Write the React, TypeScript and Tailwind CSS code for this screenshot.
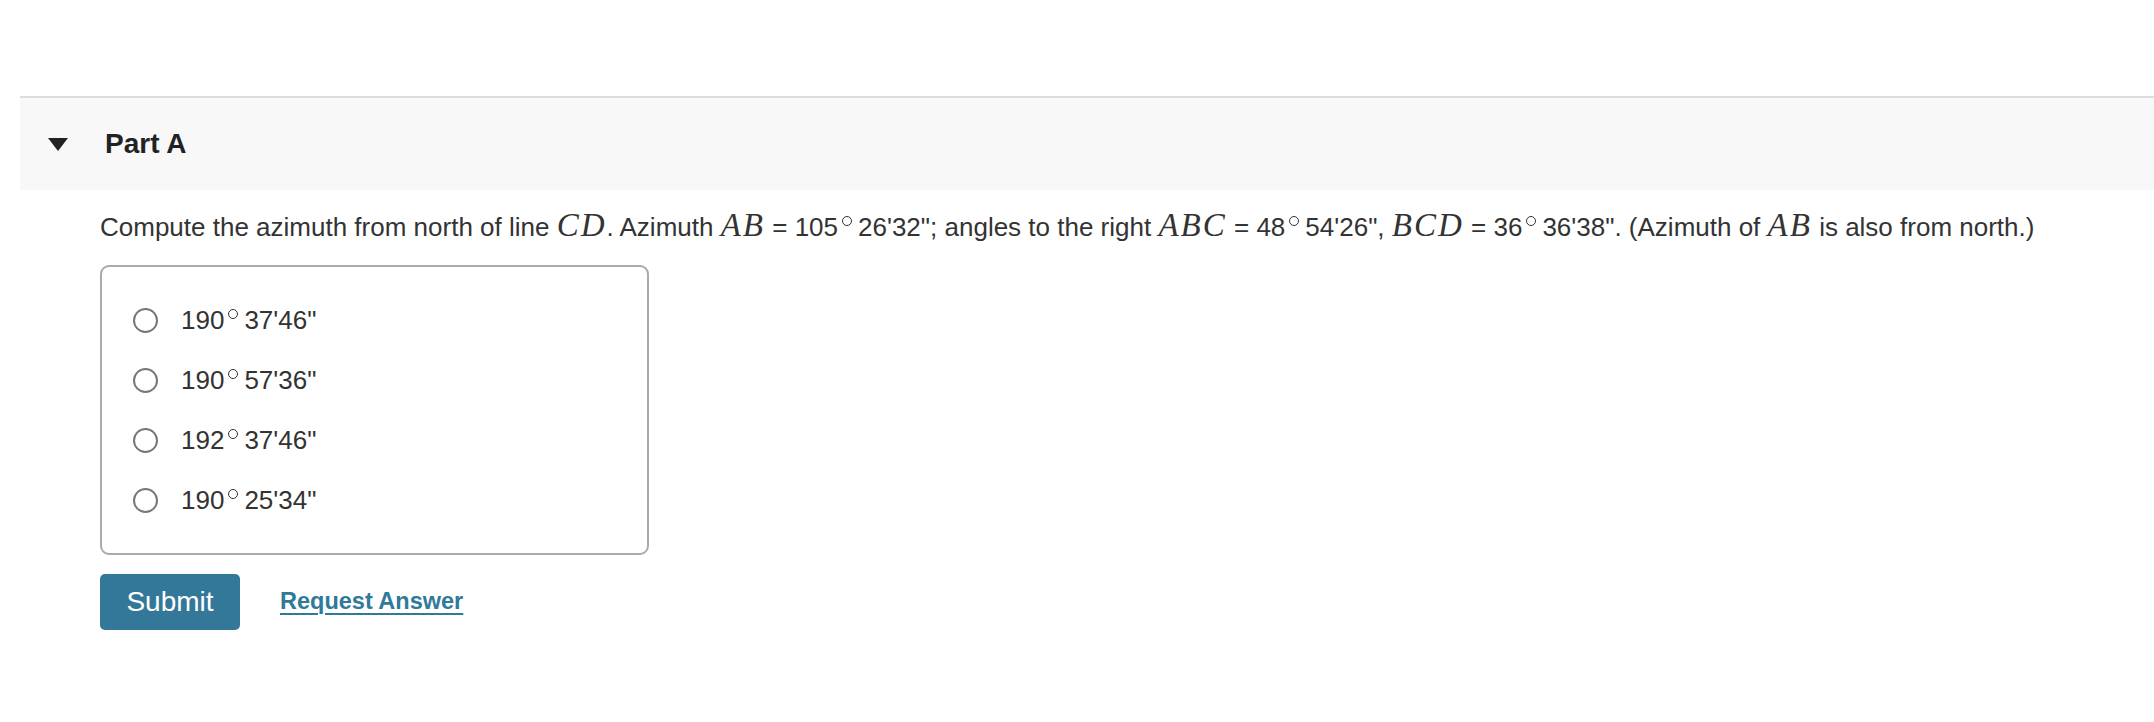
import React from 'react';

const M: React.FC<{ children: React.ReactNode }> = ({ children }) => (
  <span className="font-['Liberation_Serif','DejaVu_Serif',serif] italic text-[33px] tracking-[2px] leading-none">{children}</span>
);

// superscript degree ring, drawn as a thin circle
const Deg: React.FC = () => (
  <span className="relative -top-[10px] ml-[4px] mr-[6px] inline-block h-[10px] w-[10px] rounded-full border-[1.5px] border-[#333]" />
);

const options = [
  ['190', "37'46\""],
  ['190', "57'36\""],
  ['192', "37'46\""],
  ['190', "25'34\""],
];

export default function App() {
  return (
    <div className="min-h-screen bg-white pt-[96px] pl-[20px] font-['Liberation_Sans',Arial,sans-serif] text-[#333]">
      {/* Part header */}
      <div className="flex h-[94px] items-center border-t-2 border-[#ddd] bg-[#f8f8f8]">
        <svg className="ml-[28px]" width="20" height="13" viewBox="0 0 20 13">
          <path d="M0 0 L20 0 L10 13 Z" fill="#222" />
        </svg>
        <h2 className="ml-[37px] text-[28px] font-bold text-[#222]">Part A</h2>
      </div>

      <div className="pl-[80px]">
        <p className="mt-[19px] text-[26px] leading-[36px] whitespace-nowrap">
          Compute the azimuth from north of line <M>CD</M>. Azimuth <M>AB</M> = 105<Deg />26'32"; angles to the right{' '}
          <M>ABC</M> = 48<Deg />54'26", <M>BCD</M> = 36<Deg />36'38". (Azimuth of <M>AB</M> is also from north.)
        </p>

        <div className="mt-[20px] h-[290px] w-[549px] rounded-[9px] border-2 border-[#aaa] py-[23px] pl-[31px]">
          {options.map(([d, rest], i) => (
            <label key={i} className="flex h-[60px] items-center text-[26px]">
              <span className="h-[25px] w-[25px] rounded-full border-2 border-[#777] bg-white" />
              <span className="ml-[23px]">
                {d}
                <Deg />
                {rest}
              </span>
            </label>
          ))}
        </div>

        <div className="mt-[19px] flex items-center">
          <button className="h-[56px] w-[140px] rounded-[5px] bg-[#347899] text-[28px] text-white">Submit</button>
          <a href="#" className="ml-[40px] text-[23.5px] font-bold text-[#2f7a9a] underline decoration-2 underline-offset-4">
            Request Answer
          </a>
        </div>
      </div>
    </div>
  );
}
